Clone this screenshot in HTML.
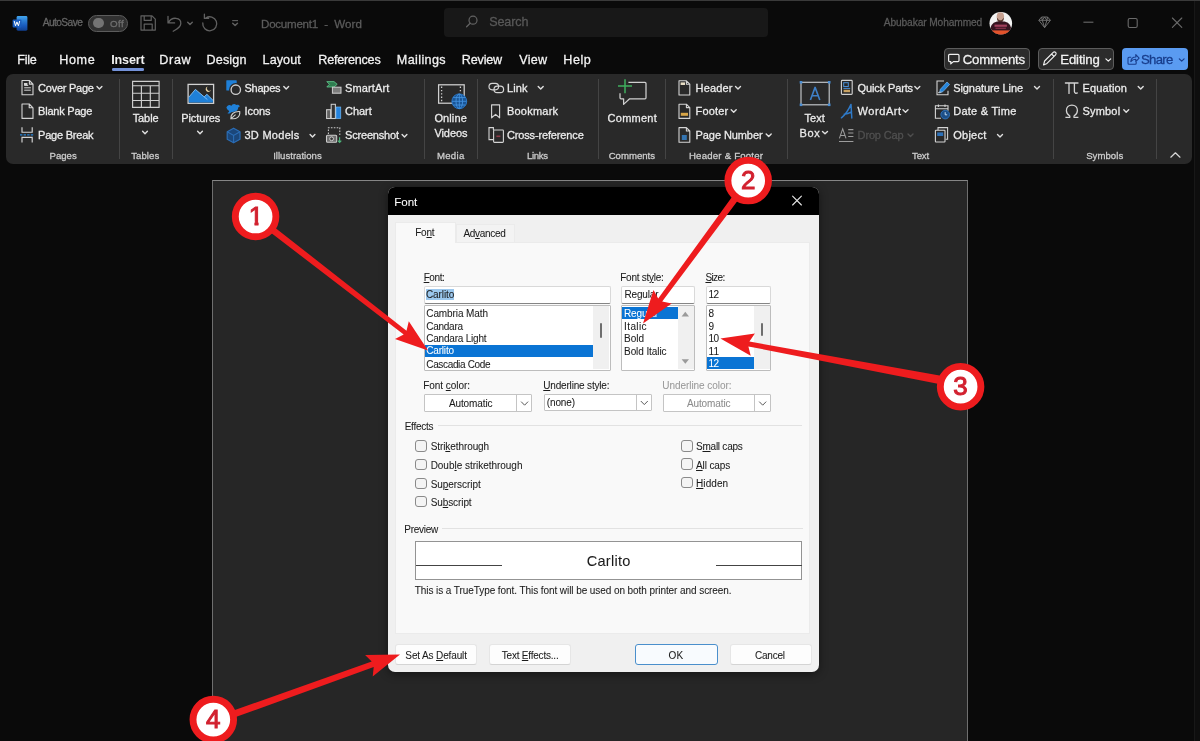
<!DOCTYPE html>
<html lang="en"><head><meta charset="utf-8"><title>Font - Word</title>
<style>
html,body{margin:0;padding:0;}
html{width:1200px;height:741px;overflow:hidden;background:#0a0a0a;}
body{width:1200px;height:741px;overflow:hidden;background:#0a0a0a;position:relative;font-family:"Liberation Sans", sans-serif;}
.t{position:absolute;white-space:nowrap;line-height:1;font-family:"Liberation Sans", sans-serif;-webkit-text-stroke-width:.28px;}
.t u{text-decoration:underline;text-decoration-thickness:1px;text-underline-offset:1px;}
#stage{position:absolute;left:-6px;top:-6px;width:1212px;height:753px;overflow:hidden;background:#0a0a0a;filter:blur(.5px);}
#clip{position:absolute;left:0;top:0;width:1200px;height:741px;overflow:hidden;contain:paint;}
#in{position:absolute;left:6px;top:6px;width:1200px;height:741px;}

.box{position:absolute;box-sizing:border-box;}
svg{position:absolute;left:0;top:0;overflow:visible;}
</style></head>
<body>
<div id="clip"><div id="stage"><div id="in">
<div class="box" style="left:0.0px;top:0.0px;width:1200.0px;height:1.2px;background:#3a3a3a;"></div>
<div class="box" style="left:444.3px;top:8.3px;width:324.0px;height:29.0px;background:#181818;border-radius:4px;"></div>
<div class="box" style="left:88.3px;top:15.0px;width:40.0px;height:16.6px;background:#313131;border:1px solid #5c5c5c;border-radius:9px;"></div>
<div class="box" style="left:93.4px;top:18.2px;width:10.2px;height:10.2px;background:#747474;border-radius:50%;"></div>
<div class="box" style="left:112.0px;top:68.3px;width:32.0px;height:2.5px;background:#7492d8;border-radius:1.3px;"></div>
<div class="box" style="left:943.9px;top:48.1px;width:86.0px;height:22.3px;background:#2c2c2c;border:1px solid #5c5c5c;border-radius:4px;"></div>
<div class="box" style="left:1037.9px;top:48.1px;width:76.5px;height:22.3px;background:#2c2c2c;border:1px solid #5c5c5c;border-radius:4px;"></div>
<div class="box" style="left:1122.0px;top:48.1px;width:66.1px;height:22.3px;background:#5a9bf1;border-radius:4px;"></div>
<div class="box" style="left:6.0px;top:73.7px;width:1185.8px;height:90.3px;background:#292929;border-radius:7px;"></div>
<div class="box" style="left:118.7px;top:79.0px;width:1.1px;height:80.0px;background:#444444;"></div>
<div class="box" style="left:172.0px;top:79.0px;width:1.1px;height:80.0px;background:#444444;"></div>
<div class="box" style="left:423.7px;top:79.0px;width:1.1px;height:80.0px;background:#444444;"></div>
<div class="box" style="left:477.0px;top:79.0px;width:1.1px;height:80.0px;background:#444444;"></div>
<div class="box" style="left:598.2px;top:79.0px;width:1.1px;height:80.0px;background:#444444;"></div>
<div class="box" style="left:665.0px;top:79.0px;width:1.1px;height:80.0px;background:#444444;"></div>
<div class="box" style="left:787.0px;top:79.0px;width:1.1px;height:80.0px;background:#444444;"></div>
<div class="box" style="left:1052.5px;top:79.0px;width:1.1px;height:80.0px;background:#444444;"></div>
<div class="box" style="left:1155.8px;top:79.0px;width:1.1px;height:80.0px;background:#444444;"></div>
<div class="box" style="left:1194.0px;top:1.0px;width:6.0px;height:740.0px;background:#0e0e0e;border-left:1px solid #181818;"></div>
<div class="box" style="left:212.4px;top:180.0px;width:756.0px;height:580.0px;background:#262626;border:1px solid #6e6e6e;border-top-color:#868686;"></div>
<div class="box" style="left:388.0px;top:186.6px;width:431.3px;height:485.4px;background:#f0f0f0;border-radius:7px;box-shadow:0 2px 10px rgba(0,0,0,.45);overflow:hidden;"></div>
<div class="box" style="left:388.0px;top:186.6px;width:431.3px;height:28.0px;background:#000;border-radius:7px 7px 0 0;"></div>
<div class="box" style="left:394.8px;top:242.0px;width:415.4px;height:391.6px;background:#f9f9f9;border:1px solid #ebebeb;"></div>
<div class="box" style="left:456.0px;top:224.4px;width:58.8px;height:18.0px;background:#f3f3f3;border:1px solid #ebebeb;border-bottom:none;"></div>
<div class="box" style="left:394.8px;top:222.3px;width:61.6px;height:20.9px;background:#f9f9f9;border:1px solid #ebebeb;border-bottom:none;"></div>
<div class="box" style="left:424.0px;top:285.8px;width:186.6px;height:18.6px;background:#fff;border:1px solid #d9d9d9;border-bottom:1px solid #858585;border-radius:2px;"></div>
<div class="box" style="left:621.2px;top:285.8px;width:73.6px;height:18.5px;background:#fff;border:1px solid #d9d9d9;border-bottom:1px solid #858585;border-radius:2px;"></div>
<div class="box" style="left:705.5px;top:285.8px;width:65.4px;height:18.5px;background:#fff;border:1px solid #d9d9d9;border-bottom:1px solid #858585;border-radius:2px;"></div>
<div class="box" style="left:425.8px;top:288.8px;width:28.6px;height:11.4px;background:#9cc8ee;"></div>
<div class="box" style="left:424.0px;top:305.2px;width:186.6px;height:65.4px;background:#fff;border:1px solid #bdbdbd;border-radius:1px;"></div>
<div class="box" style="left:621.2px;top:305.2px;width:73.6px;height:65.4px;background:#fff;border:1px solid #bdbdbd;border-radius:1px;"></div>
<div class="box" style="left:705.5px;top:305.2px;width:65.4px;height:65.4px;background:#fff;border:1px solid #bdbdbd;border-radius:1px;"></div>
<div class="box" style="left:593.2px;top:306.0px;width:16.2px;height:63.4px;background:#f0f0f0;"></div>
<div class="box" style="left:678.0px;top:306.0px;width:15.8px;height:63.4px;background:#f0f0f0;"></div>
<div class="box" style="left:754.2px;top:306.0px;width:15.7px;height:63.4px;background:#f0f0f0;"></div>
<div class="box" style="left:600.0px;top:323.3px;width:2.2px;height:15.1px;background:#6e6e6e;border-radius:1px;"></div>
<div class="box" style="left:761.0px;top:322.7px;width:2.2px;height:13.6px;background:#6e6e6e;border-radius:1px;"></div>
<div class="box" style="left:425.3px;top:344.5px;width:167.9px;height:12.0px;background:#0a74d4;"></div>
<div class="box" style="left:622.3px;top:306.7px;width:55.7px;height:12.1px;background:#0a74d4;"></div>
<div class="box" style="left:707.0px;top:356.8px;width:47.2px;height:12.4px;background:#0a74d4;"></div>
<div class="box" style="left:423.7px;top:394.0px;width:108.6px;height:18.3px;background:#fff;border:1px solid #c4c4c4;border-radius:1px;"></div>
<div class="box" style="left:516.4px;top:394.0px;width:1.0px;height:18.3px;background:#c4c4c4;"></div>
<div class="box" style="left:543.8px;top:394.3px;width:107.8px;height:16.7px;background:#fff;border:1px solid #c4c4c4;border-radius:1px;"></div>
<div class="box" style="left:636.1px;top:394.3px;width:1.0px;height:16.7px;background:#c4c4c4;"></div>
<div class="box" style="left:662.6px;top:394.0px;width:108.2px;height:18.3px;background:#fff;border:1px solid #c4c4c4;border-radius:1px;"></div>
<div class="box" style="left:754.4px;top:394.0px;width:1.0px;height:18.3px;background:#c4c4c4;"></div>
<div class="box" style="left:437.5px;top:425.4px;width:364.3px;height:1.0px;background:#e2e2e2;"></div>
<div class="box" style="left:442.3px;top:528.0px;width:360.5px;height:1.0px;background:#e2e2e2;"></div>
<div class="box" style="left:415.1px;top:440.0px;width:12.2px;height:11.6px;background:#f4f4f4;border:1px solid #8a8a8a;border-radius:3px;"></div>
<div class="box" style="left:415.1px;top:458.6px;width:12.2px;height:11.6px;background:#f4f4f4;border:1px solid #8a8a8a;border-radius:3px;"></div>
<div class="box" style="left:415.1px;top:477.6px;width:12.2px;height:11.6px;background:#f4f4f4;border:1px solid #8a8a8a;border-radius:3px;"></div>
<div class="box" style="left:415.1px;top:495.9px;width:12.2px;height:11.6px;background:#f4f4f4;border:1px solid #8a8a8a;border-radius:3px;"></div>
<div class="box" style="left:680.6px;top:439.9px;width:12.2px;height:11.7px;background:#f4f4f4;border:1px solid #8a8a8a;border-radius:3px;"></div>
<div class="box" style="left:680.6px;top:458.3px;width:12.2px;height:11.7px;background:#f4f4f4;border:1px solid #8a8a8a;border-radius:3px;"></div>
<div class="box" style="left:680.6px;top:476.7px;width:12.2px;height:11.7px;background:#f4f4f4;border:1px solid #8a8a8a;border-radius:3px;"></div>
<div class="box" style="left:415.3px;top:541.3px;width:386.9px;height:39.2px;background:#fff;border:1px solid #939393;"></div>
<div class="box" style="left:415.8px;top:565.4px;width:86.0px;height:1.0px;background:#444;"></div>
<div class="box" style="left:716.0px;top:565.4px;width:85.8px;height:1.0px;background:#444;"></div>
<div class="box" style="left:395.3px;top:644.0px;width:81.5px;height:20.8px;background:#fdfdfd;border:1px solid #e6e6e6;border-bottom-color:#d4d4d4;border-radius:3px;"></div>
<div class="box" style="left:489.3px;top:644.0px;width:82.0px;height:20.8px;background:#fdfdfd;border:1px solid #e6e6e6;border-bottom-color:#d4d4d4;border-radius:3px;"></div>
<div class="box" style="left:635.1px;top:644.0px;width:82.6px;height:20.8px;background:#f8fbfe;border:1.4px solid #4a8fcc;border-radius:3px;"></div>
<div class="box" style="left:729.7px;top:644.0px;width:81.9px;height:20.8px;background:#fdfdfd;border:1px solid #e6e6e6;border-bottom-color:#d4d4d4;border-radius:3px;"></div>
<svg width="1200" height="741" viewBox="0 0 1200 741"><defs><linearGradient id="wg" x1="0" y1="0" x2="0" y2="1"><stop offset="0" stop-color="#41a5ee"/><stop offset=".33" stop-color="#2b7cd3"/><stop offset=".66" stop-color="#185abd"/><stop offset="1" stop-color="#103f91"/></linearGradient></defs>
<rect x="16.6" y="16" width="10.8" height="14.7" rx="1.4" fill="url(#wg)"/>
<rect x="12.6" y="19.4" width="8.8" height="8.2" rx="1" fill="#1a5dbe"/>
<path d="M14.3 21.4 l1.2 4.4 l1.45 -3.9 l1.45 3.9 l1.2 -4.4" fill="none" stroke="#fff" stroke-width="1" stroke-linejoin="round" stroke-linecap="round"/>
<path d="M141 15.8 h11 l3.3 3.3 v11 h-14.3 z M144.2 15.8 v4.6 h7 v-4.6 M144.2 30.1 v-6 h8 v6" fill="none" stroke="#606060" stroke-width="1.2" stroke-linejoin="round"/>
<path d="M168 16.3 v6.6 h6.6 M168.4 22.6 C171.5 16.4 181.2 17 180.8 23.6 C180.5 27.6 176.5 29.4 173.2 31.2" fill="none" stroke="#606060" stroke-width="1.3" stroke-linecap="round" stroke-linejoin="round"/>
<path d="M187.7 22.2 L190.0 24.6 L192.3 22.2" fill="none" stroke="#606060" stroke-width="1.4" stroke-linecap="round" stroke-linejoin="round"/>
<path d="M205.800 18 A7 7 0 1 1 202.800 23 M208.600 18.400 h-4.200 v-4.200" fill="none" stroke="#606060" stroke-width="1.3" stroke-linecap="round" stroke-linejoin="round"/>
<path d="M232.2 20.6 h5.8" stroke="#606060" stroke-width="1.1" fill="none"/>
<path d="M232.7 23.2 L235.1 25.6 L237.5 23.2" fill="none" stroke="#606060" stroke-width="1.4" stroke-linecap="round" stroke-linejoin="round"/>
<circle cx="473" cy="20.2" r="4" fill="none" stroke="#626262" stroke-width="1.2"/><path d="M470.1 23.2 L466.6 26.8" stroke="#626262" stroke-width="1.3" stroke-linecap="round"/>
<clipPath id="av"><circle cx="1000.8" cy="23.2" r="11.3"/></clipPath>
<g clip-path="url(#av)"><rect x="988" y="10" width="26" height="27" fill="#f3f3f3"/><ellipse cx="1000.4" cy="16.6" rx="3.7" ry="4.4" fill="#c7a191"/><path d="M996.8 17.4 q3.6 5.6 7.2 0 q-.4 5 -3.6 5 q-3.2 0 -3.6 -5z" fill="#5b3b31"/><path d="M989.5 36 q-.5 -13.5 7.5 -14.6 h7.6 q8 1.100 7.500 14.6z" fill="#35131f"/><rect x="994.5" y="24.6" width="12.4" height="2.2" fill="#a23f5c"/><rect x="995.5" y="27.6" width="10.4" height="1.4" fill="#7d2c45"/><rect x="989" y="30.4" width="24" height="6" fill="#e3532b"/></g>
<path d="M1038.8 20.3 L1041.6 17 H1047.6 L1050.4 20.3 L1044.6 27.6 Z M1038.8 20.3 H1050.4 M1042.3 20.3 L1044.6 27.6 L1046.9 20.3 M1041.6 17 L1042.3 20.3 L1044.6 17 L1046.9 20.3 L1047.6 17" fill="none" stroke="#727272" stroke-width="0.95" stroke-linejoin="round"/>
<path d="M1083.4 22.2 h10" stroke="#6a6a6a" stroke-width="1.1"/>
<rect x="1128.2" y="18.5" width="9" height="9" rx="1.6" fill="none" stroke="#6a6a6a" stroke-width="1.1"/>
<path d="M1172.4 18 l9.400 9.400 M1181.8 18 l-9.400 9.400" stroke="#6a6a6a" stroke-width="1.1" stroke-linecap="round"/>
<path d="M949.600 54.400 h8.400 a1 1 0 0 1 1 1 v5.200 a1 1 0 0 1 -1 1 h-4.600 l-2.600 2.300 v-2.300 h-1.200 a1 1 0 0 1 -1 -1 v-5.200 a1 1 0 0 1 1 -1z" fill="none" stroke="#f0f0f0" stroke-width="1.2" stroke-linejoin="round"/>
<path d="M1043.6 65 l1 -4 l8.6 -8.6 a1.5 1.5 0 0 1 2.4 2.4 l-8.6 8.6 z M1051.6 54 l2.6 2.6" fill="none" stroke="#f0f0f0" stroke-width="1.15" stroke-linejoin="round"/>
<path d="M1105.9 58.8 L1108.3 61.2 L1110.7 58.8" fill="none" stroke="#f0f0f0" stroke-width="1.2" stroke-linecap="round" stroke-linejoin="round"/>
<path d="M1131.2 57.3 h-2.2 a1 1 0 0 0 -1 1 v5 a1 1 0 0 0 1 1 h6.2 a1 1 0 0 0 1 -1 v-1.4 M1130.8 61.6 c.3 -3.2 2.4 -4.6 5 -4.6 v-2.4 l3.3 3.5 l-3.3 3.5 v-2.4 c-2.2 0 -3.8 .6 -5 2.4z" fill="none" stroke="#183d8c" stroke-width="1.1" stroke-linejoin="round"/>
<path d="M1179.3 58.8 L1181.7 61.2 L1184.1 58.8" fill="none" stroke="#183d8c" stroke-width="1.2" stroke-linecap="round" stroke-linejoin="round"/>
<path d="M22 80.5 h7.4 l3.6 3.6 v10.6 h-11 z M29.4 80.5 v3.6 h3.6" fill="none" stroke="#d4d4d4" stroke-width="1.1" stroke-linejoin="round"/><path d="M24.2 85.4 h4 M24.2 87.8 h6.6 M24.2 90.2 h6.6" stroke="#d4d4d4" stroke-width="1"/><rect x="24" y="83" width="3.4" height="2.2" fill="#d4d4d4"/>
<path d="M97.0 86.4 L99.4 88.9 L101.9 86.4" fill="none" stroke="#e0e0e0" stroke-width="1.4" stroke-linecap="round" stroke-linejoin="round"/>
<path d="M22 104 h7.2 l3.8 3.8 v10.600000000000001 h-11 z M29.2 104 v3.8 h3.8" fill="none" stroke="#d4d4d4" stroke-width="1.1" stroke-linejoin="round"/>
<path d="M22 127.2 v5 h10.2 v-5 M22 142.4 v-5 h10.2 v5" fill="none" stroke="#d4d4d4" stroke-width="1.15"/><path d="M20 134.8 h14.2" stroke="#2485dc" stroke-width="1.3" stroke-dasharray="2.4 1.2"/>
<path d="M132.6 81.4 h26.5 v26 h-26.5 z M132.6 85.7 h26.5 M132.6 93.2 h26.5 M132.6 100.5 h26.5 M141.4 85.7 v21.7 M150.3 85.7 v21.7" fill="none" stroke="#cfcfcf" stroke-width="1.15"/>
<path d="M142.6 131.2 L145.0 133.7 L147.4 131.2" fill="none" stroke="#e0e0e0" stroke-width="1.4" stroke-linecap="round" stroke-linejoin="round"/>
<path d="M197.6 131.2 L200.0 133.7 L202.4 131.2" fill="none" stroke="#e0e0e0" stroke-width="1.4" stroke-linecap="round" stroke-linejoin="round"/>
<rect x="188.1" y="84.4" width="25.5" height="18.9" fill="none" stroke="#d2d2d2" stroke-width="1.3"/><path d="M188.8 97.2 L195.4 89.4 L204.2 96.8 L206.9 94.3 L212.9 100.2 V102.6 H188.8 Z" fill="#1f80d8"/><path d="M188.8 97.2 L195.4 89.4 L207.4 99.6 M204.2 96.8 L206.9 94.3 L212.9 100.2" fill="none" stroke="#86c4f8" stroke-width=".9" stroke-linejoin="round"/><path d="M207.6 86.6 a2.7 2.7 0 1 0 3.3 3.5 a2.3 2.3 0 0 1 -3.3 -3.5z" fill="#ecd6a6"/>
<rect x="226.3" y="80.2" width="10.4" height="10.4" rx=".6" fill="#1f80d8"/><circle cx="235.8" cy="89.7" r="6.7" fill="#292929"/><circle cx="235.8" cy="89.7" r="4.7" fill="none" stroke="#cdcdcd" stroke-width="1.35"/>
<path d="M283.8 86.5 L286.2 89.0 L288.6 86.5" fill="none" stroke="#e0e0e0" stroke-width="1.4" stroke-linecap="round" stroke-linejoin="round"/>
<path d="M226.4 107.6 c1 -2.600 3.400 -3.200 5 -1.600 c.6 -2 3.400 -2.600 4.800 -1 c1.400 -.8 3.200 -.2 3.600 1.400 l-1.600 1 c0 2.400 -1.400 3.600 -3.400 4.200 l-3.600 .6 c-1.200 1.600 -3 1.800 -3.800 .8 c1 -.4 1.600 -1 1.800 -2 c-1.400 -.6 -2.400 -1.800 -2.800 -3.400z" fill="#1f80d8"/><path d="M231 118.600 c-.4 -4.600 3 -7.400 8.800 -7 c.4 5.200 -3 7.800 -8.800 7z M230.400 119.200 l5.200 -4.600" fill="#292929" stroke="#cdcdcd" stroke-width="1.1" stroke-linejoin="round"/>
<path d="M233.600 128.200 l6.400 3.600 v7.400 l-6.400 3.600 l-6.400 -3.600 v-7.400z" fill="#1b477a" stroke="#2b6db5" stroke-width="1.2" stroke-linejoin="round"/><path d="M227.200 131.800 l6.400 3.600 l6.400 -3.600 M233.600 135.400 v7.400" fill="none" stroke="#2b6db5" stroke-width="1.1"/>
<path d="M310.1 134.6 L312.5 137.1 L314.9 134.6" fill="none" stroke="#e0e0e0" stroke-width="1.4" stroke-linecap="round" stroke-linejoin="round"/>
<path d="M326.8 81.6 h7.2 l3.2 2.700 l-3.200 2.700 h-7.200 l2.600 -2.700z" fill="#2f7d50" stroke="#63c98e" stroke-width=".8" stroke-linejoin="round"/><rect x="332.4" y="87.2" width="8.600" height="6" fill="#7c7c7c" stroke="#d0d0d0" stroke-width="1"/>
<rect x="326.600" y="109.700" width="4" height="8.800" fill="#636363" stroke="#cdcdcd" stroke-width="1.05"/><rect x="331.200" y="104.300" width="4.200" height="14.200" fill="#333" stroke="#cdcdcd" stroke-width="1.05"/><rect x="336" y="107" width="4.800" height="11.600" fill="#2482dc" stroke="#7cc0f8" stroke-width=".6"/>
<path d="M328.400 134 v-6.200 h11.400 v7.600" fill="none" stroke="#cdcdcd" stroke-width="1.05" stroke-dasharray="1.6 1.3"/><rect x="326.500" y="135.300" width="10.200" height="7" rx="1" fill="#6e6e6e" stroke="#cdcdcd" stroke-width="1.05"/><circle cx="331.600" cy="138.800" r="1.900" fill="#3a3a3a" stroke="#d8d8d8" stroke-width=".9"/><path d="M339.600 137.200 v5 M337.900 140.600 l1.700 1.800 l1.700 -1.800" fill="none" stroke="#4fb67c" stroke-width="1.15"/>
<path d="M402.1 134.6 L404.5 137.1 L406.9 134.6" fill="none" stroke="#e0e0e0" stroke-width="1.4" stroke-linecap="round" stroke-linejoin="round"/>
<rect x="438.600" y="84.800" width="25.600" height="18.400" fill="none" stroke="#d0d0d0" stroke-width="1.25"/><path d="M441.600 86.600 v15" stroke="#d0d0d0" stroke-width="1.300" stroke-dasharray="1.4 1.9"/><path d="M460.400 86.600 v6" stroke="#d0d0d0" stroke-width="1.300" stroke-dasharray="1.4 1.9"/><circle cx="459.300" cy="101.300" r="7.400" fill="#1a5596" stroke="#2a78c8" stroke-width="1"/><path d="M452 101.300 h14.600 M459.300 94 v14.600 M453.200 97.600 h12.200 M453.200 105 h12.200" stroke="#4595e2" stroke-width=".85" fill="none"/><ellipse cx="459.300" cy="101.300" rx="3.300" ry="7.300" fill="none" stroke="#4595e2" stroke-width=".85"/>
<rect x="489" y="83.4" width="9.6" height="6.4" rx="3.2" fill="none" stroke="#d4d4d4" stroke-width="1.2"/><rect x="494" y="86.2" width="9.6" height="6.4" rx="3.2" fill="none" stroke="#d4d4d4" stroke-width="1.2"/>
<path d="M538.2 86.5 L540.7 89.0 L543.2 86.5" fill="none" stroke="#e0e0e0" stroke-width="1.4" stroke-linecap="round" stroke-linejoin="round"/>
<path d="M491.6 104.8 h8 v13 l-4 -3.4 l-4 3.4z" fill="none" stroke="#d4d4d4" stroke-width="1.15" stroke-linejoin="round"/>
<path d="M493.4 130 v-2.4 h-4.4 v12 h4.4" fill="none" stroke="#d4d4d4" stroke-width="1.1"/><rect x="493.6" y="130" width="9.8" height="12.4" rx=".8" fill="#292929" stroke="#d4d4d4" stroke-width="1.1"/><path d="M496.4 136.3 h4" stroke="#8f3b48" stroke-width="1.6"/>
<path d="M628.400 82.400 h16.600 a1 1 0 0 1 1 1 v14.400 a1 1 0 0 1 -1 1 h-15.400 l-6 5.600 v-5.600 h-2.600 a1 1 0 0 1 -1 -1 v-4.600" fill="none" stroke="#cfcfcf" stroke-width="1.25" stroke-linejoin="round"/><path d="M625 79.300 v14 M618 86 h14" stroke="#3fae5e" stroke-width="1.5" fill="none"/>
<path d="M679 80.8 h7.4 l3.4 3.4 v10.799999999999999 h-10.8 z M686.4 80.8 v3.4 h3.4" fill="none" stroke="#d4d4d4" stroke-width="1.1" stroke-linejoin="round"/><rect x="680.600" y="82.400" width="4.400" height="2.600" fill="#e6dcc4"/>
<path d="M735.5 86.5 L738.0 89.0 L740.5 86.5" fill="none" stroke="#e0e0e0" stroke-width="1.4" stroke-linecap="round" stroke-linejoin="round"/>
<path d="M679 104.2 h7.4 l3.4 3.4 v10.799999999999999 h-10.8 z M686.4 104.2 v3.4 h3.4" fill="none" stroke="#d4d4d4" stroke-width="1.1" stroke-linejoin="round"/><rect x="680.800" y="112.800" width="7.200" height="3" fill="#d8a648"/>
<path d="M731.2 109.8 L733.7 112.2 L736.2 109.8" fill="none" stroke="#e0e0e0" stroke-width="1.4" stroke-linecap="round" stroke-linejoin="round"/>
<path d="M679 127.6 h7.4 l3.4 3.4 v11.2 h-10.8 z M686.4 127.6 v3.4 h3.4" fill="none" stroke="#d4d4d4" stroke-width="1.1" stroke-linejoin="round"/><rect x="681.800" y="135" width="5" height="5" fill="#3474b0"/>
<path d="M766.2 134.0 L768.7 136.5 L771.2 134.0" fill="none" stroke="#e0e0e0" stroke-width="1.4" stroke-linecap="round" stroke-linejoin="round"/>
<rect x="801" y="82.300" width="28.200" height="22.500" fill="none" stroke="#c4c8cc" stroke-width="1.15"/><path d="M810.400 100 l4.700 -12.600 l4.700 12.600 M812 95.800 h6.200" fill="none" stroke="#3f80c8" stroke-width="1.6" stroke-linejoin="round"/><rect x="799.7" y="81.0" width="2.6" height="2.6" fill="#4a8fd6"/><rect x="799.7" y="103.5" width="2.6" height="2.6" fill="#4a8fd6"/><rect x="827.9000000000001" y="81.0" width="2.6" height="2.6" fill="#4a8fd6"/><rect x="827.9000000000001" y="103.5" width="2.6" height="2.6" fill="#4a8fd6"/>
<path d="M822.5 131.4 L825.0 133.8 L827.5 131.4" fill="none" stroke="#e0e0e0" stroke-width="1.4" stroke-linecap="round" stroke-linejoin="round"/>
<rect x="841.400" y="80.400" width="10.800" height="14" rx=".8" fill="none" stroke="#cfcfcf" stroke-width="1.15"/><rect x="843.700" y="82.700" width="4.600" height="3.800" fill="none" stroke="#4a8fd6" stroke-width="1"/><path d="M843.400 88.400 h6.800" stroke="#4a8fd6" stroke-width="1"/><rect x="843.600" y="89.800" width="6.400" height="2.400" fill="#c9a262"/>
<path d="M914.8 86.5 L917.3 89.0 L919.8 86.5" fill="none" stroke="#e0e0e0" stroke-width="1.4" stroke-linecap="round" stroke-linejoin="round"/>
<path d="M841.400 117.800 c3.400 -2.600 7 -7.600 9.600 -13.400 l.8 13.600 M844.200 114.200 c2.400 -.2 5 -1 7.400 -2.400" fill="none" stroke="#2f7ac8" stroke-width="1.45" stroke-linecap="round" stroke-linejoin="round"/>
<path d="M903.0 109.8 L905.5 112.2 L908.0 109.8" fill="none" stroke="#e0e0e0" stroke-width="1.4" stroke-linecap="round" stroke-linejoin="round"/>
<path d="M839.4 138.4 l3.3 -9.6 l3.3 9.6 M840.6 135.4 h4.2 M848.2 129.6 h5.2 M848.2 133 h5.2 M848.2 136.4 h5.2 M839 141.4 h14.4" fill="none" stroke="#9c9c9c" stroke-width="1.05"/>
<path d="M908.0 134.0 L910.5 136.5 L913.0 134.0" fill="none" stroke="#4e4e4e" stroke-width="1.4" stroke-linecap="round" stroke-linejoin="round"/>
<path d="M944 81 h-7 v13.8 h11 v-4" fill="none" stroke="#d4d4d4" stroke-width="1.1"/><path d="M939.4 93 l1 -3.8 l6.6 -7.2 l2.6 2.4 l-6.6 7.2z" fill="#2485dc" stroke="#8cc4f6" stroke-width=".6"/><path d="M938 93 c1.4 -1.4 2.4 -.4 3.4 -1" stroke="#d4d4d4" stroke-width=".9" fill="none"/>
<path d="M1034.5 86.5 L1037.0 89.0 L1039.5 86.5" fill="none" stroke="#e0e0e0" stroke-width="1.4" stroke-linecap="round" stroke-linejoin="round"/>
<path d="M941 118.2 h-5.6 v-12.4 h12.6 v5 M935.4 108.8 h12.6 M938.4 104.4 v2.6 M945 104.4 v2.6" fill="none" stroke="#d4d4d4" stroke-width="1.1"/><circle cx="945.2" cy="114.6" r="4.3" fill="#1d4f88" stroke="#2c70b8" stroke-width="1"/><path d="M945.2 112.2 v2.6 h2" fill="none" stroke="#cfe6fa" stroke-width=".9"/>
<path d="M938 130 v-2.4 h9.6 v11.6 h-2" fill="none" stroke="#d4d4d4" stroke-width="1.05"/><rect x="935.4" y="130.2" width="9.6" height="11.8" rx=".6" fill="#292929" stroke="#d4d4d4" stroke-width="1.1"/><rect x="937.2" y="132.4" width="6" height="3.6" fill="#2c70b8"/>
<path d="M997.5 134.6 L1000.0 137.1 L1002.5 134.6" fill="none" stroke="#e0e0e0" stroke-width="1.4" stroke-linecap="round" stroke-linejoin="round"/>
<path d="M1065.4 83 h12.6 M1069 83 v10.4 M1074.4 83 v8.6 c0 1.6 1.6 2 3 1.4" fill="none" stroke="#d4d4d4" stroke-width="1.3" stroke-linecap="round"/>
<path d="M1138.2 86.5 L1140.7 89.0 L1143.2 86.5" fill="none" stroke="#e0e0e0" stroke-width="1.4" stroke-linecap="round" stroke-linejoin="round"/>
<path d="M1065.4 117.4 h4.4 v-1.4 c-2.2 -1.4 -3.4 -3.4 -3.4 -5.6 c0 -3.2 2.4 -5.4 5.5 -5.4 c3.1 0 5.5 2.2 5.5 5.4 c0 2.2 -1.2 4.2 -3.4 5.6 v1.4 h4.4" fill="none" stroke="#d4d4d4" stroke-width="1.25" stroke-linejoin="round"/>
<path d="M1123.8 109.8 L1126.2 112.2 L1128.7 109.8" fill="none" stroke="#e0e0e0" stroke-width="1.4" stroke-linecap="round" stroke-linejoin="round"/>
<path d="M1170.8 157.2 L1175.4 152.8 L1180 157.2" fill="none" stroke="#d8d8d8" stroke-width="1.2" stroke-linecap="round" stroke-linejoin="round"/>
<path d="M792.6 196.2 l8.8 8.8 M801.4 196.2 l-8.8 8.8" stroke="#e8e8e8" stroke-width="1.1" stroke-linecap="round"/>
<path d="M521.4 401.9 L524.6 405.2 L527.8 401.9" fill="none" stroke="#5a5a5a" stroke-width="1" stroke-linecap="round" stroke-linejoin="round"/>
<path d="M641.1 401.3 L644.3 404.6 L647.5 401.3" fill="none" stroke="#5a5a5a" stroke-width="1" stroke-linecap="round" stroke-linejoin="round"/>
<path d="M759.5 401.9 L762.7 405.2 L765.9 401.9" fill="none" stroke="#5a5a5a" stroke-width="1" stroke-linecap="round" stroke-linejoin="round"/>
<path d="M681.6 316.4 h7.4 l-3.7 -4.6z" fill="#9a9a9a"/><path d="M681.6 359.2 h7.4 l-3.7 4.6z" fill="#9a9a9a"/></svg>
<span class="t" style="left:42.74px;top:18.38px;font-size:10.2px;color:#666666;letter-spacing:-0.581px;">AutoSave</span><span class="t" style="left:109.96px;top:18.58px;font-size:9.8px;color:#707070;letter-spacing:0.494px;">Off</span><span class="t" style="left:261.06px;top:17.71px;font-size:11.6px;color:#5c5c5c;letter-spacing:-0.278px;">Document1</span><span class="t" style="left:324.36px;top:17.71px;font-size:11.6px;color:#5c5c5c;">-</span><span class="t" style="left:334.36px;top:17.71px;font-size:11.6px;color:#5c5c5c;letter-spacing:0.025px;">Word</span><span class="t" style="left:489.31px;top:16.13px;font-size:12.6px;color:#585858;letter-spacing:-0.164px;">Search</span><span class="t" style="left:883.74px;top:18.38px;font-size:10.2px;color:#5a5a5a;letter-spacing:-0.107px;">Abubakar Mohammed</span><span class="t" style="left:17.31px;top:54.13px;font-size:12.6px;color:#f2f2f2;letter-spacing:-0.304px;">File</span><span class="t" style="left:59.31px;top:54.13px;font-size:12.6px;color:#f2f2f2;letter-spacing:0.597px;">Home</span><span class="t" style="left:111.31px;top:54.13px;font-size:12.6px;color:#f2f2f2;font-weight:700;letter-spacing:-0.182px;-webkit-text-stroke-width:0;">Insert</span><span class="t" style="left:159.31px;top:54.13px;font-size:12.6px;color:#f2f2f2;letter-spacing:0.665px;">Draw</span><span class="t" style="left:206.61px;top:54.13px;font-size:12.6px;color:#f2f2f2;letter-spacing:0.117px;">Design</span><span class="t" style="left:262.61px;top:54.13px;font-size:12.6px;color:#f2f2f2;letter-spacing:0.055px;">Layout</span><span class="t" style="left:318.31px;top:54.13px;font-size:12.6px;color:#f2f2f2;letter-spacing:-0.224px;">References</span><span class="t" style="left:396.81px;top:54.13px;font-size:12.6px;color:#f2f2f2;letter-spacing:0.383px;">Mailings</span><span class="t" style="left:461.81px;top:54.13px;font-size:12.6px;color:#f2f2f2;letter-spacing:-0.182px;">Review</span><span class="t" style="left:519.31px;top:54.13px;font-size:12.6px;color:#f2f2f2;letter-spacing:0.269px;">View</span><span class="t" style="left:563.31px;top:54.13px;font-size:12.6px;color:#f2f2f2;letter-spacing:0.493px;">Help</span><span class="t" style="left:962.67px;top:52.84px;font-size:13.2px;color:#f2f2f2;letter-spacing:-0.173px;">Comments</span><span class="t" style="left:1060.27px;top:52.84px;font-size:13.2px;color:#f2f2f2;letter-spacing:-0.146px;">Editing</span><span class="t" style="left:1140.97px;top:52.84px;font-size:13.2px;color:#183d8c;letter-spacing:-0.688px;">Share</span><span class="t" style="left:38.10px;top:82.70px;font-size:11px;color:#ececec;letter-spacing:-0.254px;">Cover Page</span><span class="t" style="left:38.10px;top:106.00px;font-size:11px;color:#ececec;letter-spacing:-0.228px;">Blank Page</span><span class="t" style="left:38.10px;top:130.20px;font-size:11px;color:#ececec;letter-spacing:-0.219px;">Page Break</span><span class="t" style="left:132.70px;top:112.90px;font-size:11px;color:#ececec;letter-spacing:-0.097px;">Table</span><span class="t" style="left:181.20px;top:112.70px;font-size:11px;color:#ececec;letter-spacing:-0.091px;">Pictures</span><span class="t" style="left:244.40px;top:82.70px;font-size:11px;color:#ececec;letter-spacing:-0.220px;">Shapes</span><span class="t" style="left:244.40px;top:106.00px;font-size:11px;color:#ececec;letter-spacing:-0.022px;">Icons</span><span class="t" style="left:244.40px;top:130.20px;font-size:11px;color:#ececec;letter-spacing:0.291px;">3D Models</span><span class="t" style="left:345.00px;top:82.70px;font-size:11px;color:#ececec;letter-spacing:0.129px;">SmartArt</span><span class="t" style="left:345.00px;top:106.00px;font-size:11px;color:#ececec;letter-spacing:-0.024px;">Chart</span><span class="t" style="left:345.00px;top:130.20px;font-size:11px;color:#ececec;letter-spacing:-0.183px;">Screenshot</span><span class="t" style="left:434.39px;top:112.90px;font-size:11px;color:#ececec;letter-spacing:0.123px;">Online</span><span class="t" style="left:434.39px;top:127.90px;font-size:11px;color:#ececec;letter-spacing:-0.045px;">Videos</span><span class="t" style="left:506.89px;top:82.70px;font-size:11px;color:#ececec;letter-spacing:0.174px;">Link</span><span class="t" style="left:506.89px;top:106.00px;font-size:11px;color:#ececec;letter-spacing:0.240px;">Bookmark</span><span class="t" style="left:506.89px;top:130.20px;font-size:11px;color:#ececec;letter-spacing:-0.139px;">Cross-reference</span><span class="t" style="left:607.60px;top:112.90px;font-size:11px;color:#ececec;letter-spacing:0.254px;">Comment</span><span class="t" style="left:695.60px;top:82.70px;font-size:11px;color:#ececec;letter-spacing:0.126px;">Header</span><span class="t" style="left:695.60px;top:106.00px;font-size:11px;color:#ececec;letter-spacing:0.143px;">Footer</span><span class="t" style="left:695.60px;top:130.20px;font-size:11px;color:#ececec;letter-spacing:-0.087px;">Page Number</span><span class="t" style="left:804.39px;top:112.90px;font-size:11px;color:#ececec;letter-spacing:0.074px;">Text</span><span class="t" style="left:799.39px;top:127.90px;font-size:11px;color:#ececec;letter-spacing:0.721px;">Box</span><span class="t" style="left:857.60px;top:82.70px;font-size:11px;color:#ececec;letter-spacing:-0.135px;">Quick Parts</span><span class="t" style="left:857.60px;top:106.00px;font-size:11px;color:#ececec;letter-spacing:0.562px;">WordArt</span><span class="t" style="left:857.60px;top:130.20px;font-size:11px;color:#505050;letter-spacing:-0.153px;">Drop Cap</span><span class="t" style="left:953.19px;top:82.70px;font-size:11px;color:#ececec;letter-spacing:-0.080px;">Signature Line</span><span class="t" style="left:953.19px;top:106.00px;font-size:11px;color:#ececec;letter-spacing:0.258px;">Date &amp; Time</span><span class="t" style="left:953.19px;top:130.20px;font-size:11px;color:#ececec;letter-spacing:0.263px;">Object</span><span class="t" style="left:1082.60px;top:82.70px;font-size:11px;color:#ececec;letter-spacing:0.110px;">Equation</span><span class="t" style="left:1082.60px;top:106.00px;font-size:11px;color:#ececec;letter-spacing:0.164px;">Symbol</span><span class="t" style="left:49.47px;top:150.97px;font-size:9.6px;color:#cdcdcd;letter-spacing:0.013px;">Pages</span><span class="t" style="left:131.17px;top:150.97px;font-size:9.6px;color:#cdcdcd;letter-spacing:0.064px;">Tables</span><span class="t" style="left:273.17px;top:150.97px;font-size:9.6px;color:#cdcdcd;">Illustrations</span><span class="t" style="left:436.97px;top:150.97px;font-size:9.6px;color:#cdcdcd;letter-spacing:0.279px;">Media</span><span class="t" style="left:526.97px;top:150.97px;font-size:9.6px;color:#cdcdcd;letter-spacing:-0.338px;">Links</span><span class="t" style="left:608.67px;top:150.97px;font-size:9.6px;color:#cdcdcd;letter-spacing:-0.005px;">Comments</span><span class="t" style="left:688.97px;top:150.97px;font-size:9.6px;color:#cdcdcd;letter-spacing:0.223px;">Header &amp; Footer</span><span class="t" style="left:911.97px;top:150.97px;font-size:9.6px;color:#cdcdcd;letter-spacing:-0.118px;">Text</span><span class="t" style="left:1086.17px;top:150.97px;font-size:9.6px;color:#cdcdcd;letter-spacing:0.043px;">Symbols</span><span class="t" style="left:394.36px;top:195.61px;font-size:11.6px;color:#ffffff;letter-spacing:-0.076px;-webkit-text-stroke-width:.06px;">Font</span><span class="t" style="left:415.15px;top:228.18px;font-size:10px;color:#1b1b1b;letter-spacing:-0.205px;-webkit-text-stroke-width:.06px;">Fo<u>n</u>t</span><span class="t" style="left:463.45px;top:228.78px;font-size:10px;color:#1b1b1b;letter-spacing:-0.298px;-webkit-text-stroke-width:.06px;">Ad<u>v</u>anced</span><span class="t" style="left:423.65px;top:272.98px;font-size:10px;color:#1b1b1b;letter-spacing:-0.399px;-webkit-text-stroke-width:.06px;"><u>F</u>ont:</span><span class="t" style="left:620.25px;top:272.98px;font-size:10px;color:#1b1b1b;letter-spacing:-0.264px;-webkit-text-stroke-width:.06px;">Font st<u>y</u>le:</span><span class="t" style="left:705.45px;top:272.98px;font-size:10px;color:#1b1b1b;letter-spacing:-0.609px;-webkit-text-stroke-width:.06px;"><u>S</u>ize:</span><span class="t" style="left:425.95px;top:289.78px;font-size:10px;color:#1b1b1b;letter-spacing:-0.084px;-webkit-text-stroke-width:.06px;">Carlito</span><span class="t" style="left:624.45px;top:290.18px;font-size:10px;color:#1b1b1b;letter-spacing:-0.155px;-webkit-text-stroke-width:.06px;">Regular</span><span class="t" style="left:708.45px;top:290.18px;font-size:10px;color:#1b1b1b;letter-spacing:-0.525px;-webkit-text-stroke-width:.06px;">12</span><span class="t" style="left:426.25px;top:309.28px;font-size:10px;color:#1b1b1b;letter-spacing:-0.092px;-webkit-text-stroke-width:.06px;">Cambria Math</span><span class="t" style="left:426.25px;top:322.08px;font-size:10px;color:#1b1b1b;letter-spacing:-0.260px;-webkit-text-stroke-width:.06px;">Candara</span><span class="t" style="left:426.25px;top:334.48px;font-size:10px;color:#1b1b1b;letter-spacing:-0.211px;-webkit-text-stroke-width:.06px;">Candara Light</span><span class="t" style="left:426.25px;top:346.28px;font-size:10px;color:#ffffff;letter-spacing:-0.184px;-webkit-text-stroke-width:.06px;">Carlito</span><span class="t" style="left:426.25px;top:359.78px;font-size:10px;color:#1b1b1b;letter-spacing:-0.340px;-webkit-text-stroke-width:.06px;">Cascadia Code</span><span class="t" style="left:624.05px;top:308.68px;font-size:10px;color:#ffffff;letter-spacing:-0.172px;-webkit-text-stroke-width:.06px;">Regular</span><span class="t" style="left:624.05px;top:321.88px;font-size:10px;color:#1b1b1b;letter-spacing:0.387px;-webkit-text-stroke-width:.06px;">Italic</span><span class="t" style="left:624.05px;top:334.38px;font-size:10px;color:#1b1b1b;letter-spacing:-0.005px;-webkit-text-stroke-width:.06px;">Bold</span><span class="t" style="left:624.05px;top:347.08px;font-size:10px;color:#1b1b1b;letter-spacing:-0.086px;-webkit-text-stroke-width:.06px;">Bold Italic</span><span class="t" style="left:708.45px;top:309.38px;font-size:10px;color:#1b1b1b;-webkit-text-stroke-width:.06px;">8</span><span class="t" style="left:708.45px;top:321.88px;font-size:10px;color:#1b1b1b;-webkit-text-stroke-width:.06px;">9</span><span class="t" style="left:708.45px;top:334.38px;font-size:10px;color:#1b1b1b;letter-spacing:-0.525px;-webkit-text-stroke-width:.06px;">10</span><span class="t" style="left:708.45px;top:347.08px;font-size:10px;color:#1b1b1b;letter-spacing:0.209px;-webkit-text-stroke-width:.06px;">11</span><span class="t" style="left:708.45px;top:358.78px;font-size:10px;color:#ffffff;letter-spacing:-0.525px;-webkit-text-stroke-width:.06px;">12</span><span class="t" style="left:423.15px;top:380.78px;font-size:10px;color:#1b1b1b;letter-spacing:-0.035px;-webkit-text-stroke-width:.06px;">Font <u>c</u>olor:</span><span class="t" style="left:543.25px;top:380.78px;font-size:10px;color:#1b1b1b;letter-spacing:-0.176px;-webkit-text-stroke-width:.06px;"><u>U</u>nderline style:</span><span class="t" style="left:662.25px;top:380.78px;font-size:10px;color:#9a9a9a;letter-spacing:-0.050px;-webkit-text-stroke-width:.06px;">Underline color:</span><span class="t" style="left:448.95px;top:398.98px;font-size:10px;color:#1b1b1b;letter-spacing:-0.109px;-webkit-text-stroke-width:.06px;">Automatic</span><span class="t" style="left:546.75px;top:398.48px;font-size:10px;color:#1b1b1b;letter-spacing:-0.121px;-webkit-text-stroke-width:.06px;">(none)</span><span class="t" style="left:686.95px;top:398.98px;font-size:10px;color:#8c8c8c;letter-spacing:-0.109px;-webkit-text-stroke-width:.06px;">Automatic</span><span class="t" style="left:404.65px;top:421.98px;font-size:10px;color:#1b1b1b;letter-spacing:-0.248px;-webkit-text-stroke-width:.06px;">Effects</span><span class="t" style="left:430.65px;top:442.48px;font-size:10px;color:#1b1b1b;letter-spacing:-0.082px;-webkit-text-stroke-width:.06px;">Stri<u>k</u>ethrough</span><span class="t" style="left:430.65px;top:461.08px;font-size:10px;color:#1b1b1b;letter-spacing:-0.026px;-webkit-text-stroke-width:.06px;">Doub<u>l</u>e strikethrough</span><span class="t" style="left:430.65px;top:479.58px;font-size:10px;color:#1b1b1b;letter-spacing:-0.049px;-webkit-text-stroke-width:.06px;">Su<u>p</u>erscript</span><span class="t" style="left:430.65px;top:498.18px;font-size:10px;color:#1b1b1b;letter-spacing:-0.088px;-webkit-text-stroke-width:.06px;">Su<u>b</u>script</span><span class="t" style="left:696.05px;top:442.28px;font-size:10px;color:#1b1b1b;letter-spacing:-0.247px;-webkit-text-stroke-width:.06px;">S<u>m</u>all caps</span><span class="t" style="left:696.05px;top:460.98px;font-size:10px;color:#1b1b1b;letter-spacing:-0.119px;-webkit-text-stroke-width:.06px;"><u>A</u>ll caps</span><span class="t" style="left:696.05px;top:479.48px;font-size:10px;color:#1b1b1b;letter-spacing:0.079px;-webkit-text-stroke-width:.06px;"><u>H</u>idden</span><span class="t" style="left:404.25px;top:524.78px;font-size:10px;color:#1b1b1b;letter-spacing:-0.263px;-webkit-text-stroke-width:.06px;">Preview</span><span class="t" style="left:586.70px;top:554.06px;font-size:14.6px;color:#1b1b1b;letter-spacing:0.239px;-webkit-text-stroke-width:.06px;">Carlito</span><span class="t" style="left:414.75px;top:586.18px;font-size:10px;color:#1b1b1b;letter-spacing:-0.073px;-webkit-text-stroke-width:.06px;">This is a TrueType font. This font will be used on both printer and screen.</span><span class="t" style="left:405.35px;top:650.68px;font-size:10px;color:#1b1b1b;letter-spacing:-0.138px;-webkit-text-stroke-width:.06px;">Set As <u>D</u>efault</span><span class="t" style="left:501.75px;top:650.68px;font-size:10px;color:#1b1b1b;letter-spacing:-0.211px;-webkit-text-stroke-width:.06px;">Text <u>E</u>ffects...</span><span class="t" style="left:668.45px;top:650.68px;font-size:10px;color:#1b1b1b;letter-spacing:0.247px;-webkit-text-stroke-width:.06px;">OK</span><span class="t" style="left:754.95px;top:650.68px;font-size:10px;color:#1b1b1b;letter-spacing:-0.208px;-webkit-text-stroke-width:.06px;">Cancel</span>
<svg width="1200" height="741" viewBox="0 0 1200 741"><polygon points="428.0,350.4 408.8,321.2 406.5,330.8 260.1,215.9 255.9,221.3 403.7,334.4 395.0,339.1" fill="#ee1c1e"/>
<polygon points="643.0,323.4 671.7,303.5 662.2,301.5 749.4,185.1 743.6,180.9 658.2,298.6 653.5,290.1" fill="#ee1c1e"/>
<polygon points="720.4,338.6 750.7,355.8 748.4,346.4 949.2,386.0 950.8,377.4 749.4,341.5 754.9,333.6" fill="#ee1c1e"/>
<polygon points="400.0,654.6 365.1,655.1 371.7,661.6 220.8,715.0 223.2,721.6 373.7,667.1 372.7,676.4" fill="#ee1c1e"/>
<clipPath id="one"><path d="M240 200 h32 v21.400 h-13.500 v6 h-4 v-6 h-14.500z"/></clipPath>
<circle cx="255.6" cy="216.5" r="20.3" fill="#ffffff" stroke="#ee1c1e" stroke-width="6.9"/>
<text x="256.0" y="224.5" text-anchor="middle" font-family="Liberation Sans, sans-serif" font-size="26" fill="#d2212f" stroke="#d2212f" stroke-width="1" clip-path="url(#one)">1</text>
<circle cx="748.2" cy="180.6" r="20.3" fill="#ffffff" stroke="#ee1c1e" stroke-width="6.9"/>
<text x="748.2" y="188.6" text-anchor="middle" font-family="Liberation Sans, sans-serif" font-size="26" fill="#d2212f" stroke="#d2212f" stroke-width="1">2</text>
<circle cx="960.6" cy="386.7" r="20.3" fill="#ffffff" stroke="#ee1c1e" stroke-width="6.9"/>
<text x="960.6" y="394.7" text-anchor="middle" font-family="Liberation Sans, sans-serif" font-size="26" fill="#d2212f" stroke="#d2212f" stroke-width="1">3</text>
<circle cx="213.3" cy="719.6" r="20.3" fill="#ffffff" stroke="#ee1c1e" stroke-width="6.9"/>
<text x="213.3" y="727.6" text-anchor="middle" font-family="Liberation Sans, sans-serif" font-size="26" fill="#d2212f" stroke="#d2212f" stroke-width="1">4</text></svg>
</div></div></div>
</body></html>
